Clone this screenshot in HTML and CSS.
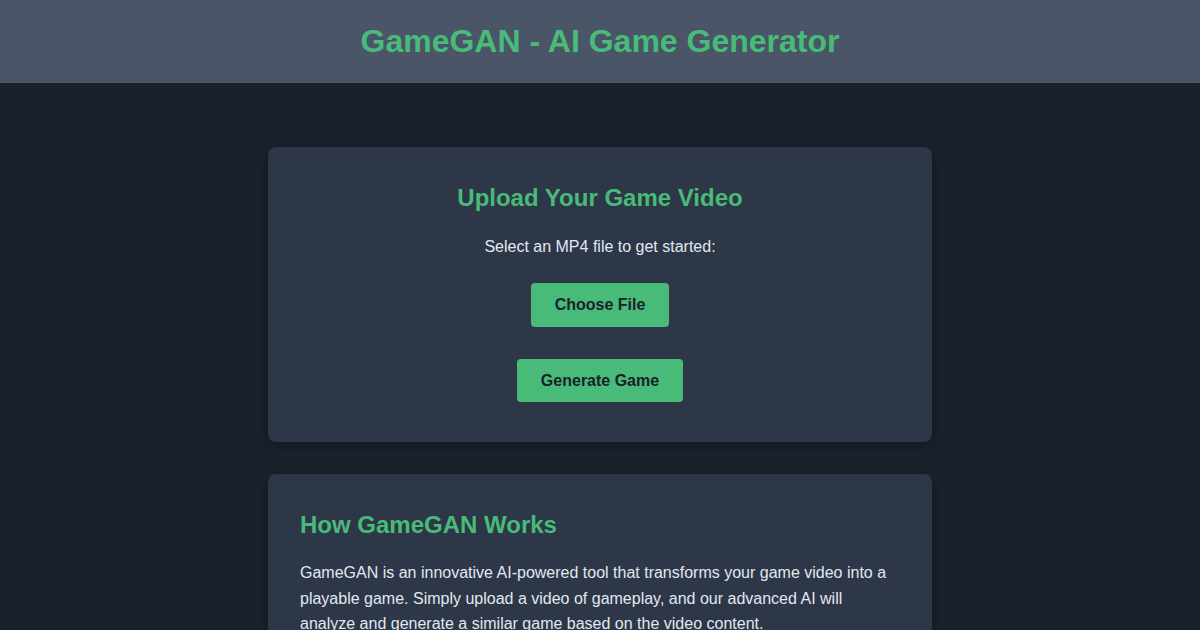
FILE: index.html
```html
<!DOCTYPE html>
<html lang="en">
<head>
    <meta charset="UTF-8">
    <meta name="viewport" content="width=device-width, initial-scale=1.0">
    <title>GameGAN - AI Game Generator</title>
    <link rel="stylesheet" href="styles.css">
</head>
<body>
<header class="site-header">
    <h1>GameGAN - AI Game Generator</h1>
</header>

<main class="container">
    <!-- upload -->
    <section class="card upload-card">
        <h2>Upload Your Game Video</h2>
        <p>Select an MP4 file to get started:</p>
        <form class="upload-form" onsubmit="return false;">
            <label class="btn file-btn" for="video-input">Choose File</label>
            <input type="file" id="video-input" accept="video/mp4" hidden>
            <button type="submit" class="btn">Generate Game</button>
        </form>
    </section>

    <!-- about -->
    <section class="card info-card">
        <h2>How GameGAN Works</h2>
        <p>GameGAN is an innovative AI-powered tool that transforms your game video into a playable game. Simply upload a video of gameplay, and our advanced AI will analyze and generate a similar game based on the video content.</p>
    </section>
</main>
</body>
</html>
```

FILE: styles.css
```css
* {
    margin: 0;
    padding: 0;
    box-sizing: border-box;
}

body {
    font-family: "Liberation Sans", Arial, sans-serif;
    background: #1a202c;
    color: #e2e8f0;
    line-height: 1.6;
}

.site-header {
    background: #4a5568;
    padding: 16px;
    text-align: center;
}

.site-header h1 {
    color: #48bb78;
    font-size: 32px;
    font-weight: bold;
}

.container {
    max-width: 664px;
    margin: 0 auto;
    padding-top: 64px;
    display: flex;
    flex-direction: column;
    gap: 32px;
}

.card {
    background: #2d3748;
    border-radius: 8px;
    padding: 32px;
    box-shadow: 0 4px 8px rgba(0, 0, 0, 0.25);
}

.card h2 {
    color: #48bb78;
    font-size: 24px;
    margin-bottom: 16px;
}

.upload-card {
    text-align: center;
    padding-bottom: 40px;
}

.upload-form {
    display: flex;
    flex-direction: column;
    align-items: center;
    gap: 32px;
    margin-top: 24px;
}

.btn {
    display: inline-block;
    background: #48bb78;
    color: #1a202c;
    font-family: inherit;
    font-size: 16px;
    font-weight: bold;
    line-height: 19px;
    border: none;
    border-radius: 4px;
    padding: 12px 24px;
    cursor: pointer;
}

.file-btn {
    line-height: 1.6;
    padding: 9px 24px;
}

.btn:hover {
    background: #38a169;
}
```
